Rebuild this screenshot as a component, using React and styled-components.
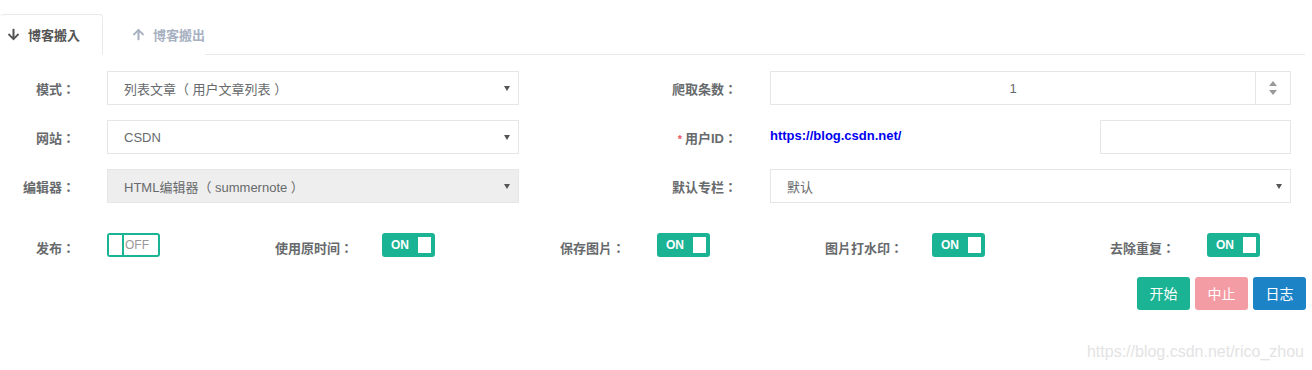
import React from 'react';
import styled, { createGlobalStyle } from 'styled-components';
import { FaArrowDown, FaArrowUp } from 'react-icons/fa';

const GlobalStyle = createGlobalStyle`
  body {
    margin: 0;
    background: #fff;
    font-family: "Liberation Sans", "Noto Sans CJK TC", sans-serif;
    font-size: 13px;
    color: #676a6c;
  }
`;

const Page = styled.div`
  position: relative;
  width: 1312px;
  height: 370px;
  overflow: hidden;
`;

const TabBar = styled.div`
  display: flex;
  margin-top: 14px;
  height: 41px;
  width: 1305px;
  border-bottom: 1px solid #e7eaec;
  box-sizing: border-box;
`;

const Tab = styled.div`
  display: flex;
  align-items: center;
  gap: 8px;
  box-sizing: border-box;
  height: 41px;
  font-weight: 700;
  font-size: 13px;
  padding: ${(p) => (p.$active ? '0 0 0 7px' : '0 0 0 29px')};
  width: ${(p) => (p.$active ? '103px' : 'auto')};
  color: ${(p) => (p.$active ? '#555' : '#a7b1c2')};
  background: #fff;
  border: ${(p) => (p.$active ? '1px solid #e7eaec' : 'none')};
  border-left: none;
  border-bottom: ${(p) => (p.$active ? '1px solid #fff' : 'none')};
  border-radius: 4px 4px 0 0;
  margin-bottom: -1px;
  svg {
    font-size: 13px;
  }
`;

const Form = styled.div`
  padding-top: 16px;
`;

const Row = styled.div`
  display: flex;
  height: 34px;
  margin-bottom: 15px;
`;

const Half = styled.div`
  display: flex;
  align-items: center;
  flex-shrink: 0;
  width: ${(p) => p.$width}px;
`;

const Label = styled.div`
  width: ${(p) => p.$width || 75}px;
  margin-right: ${(p) => p.$gap || 32}px;
  flex-shrink: 0;
  text-align: right;
  font-weight: 700;
  color: #676a6c;
  font-size: 13px;
  white-space: nowrap;
`;

const Required = styled.span`
  color: #ed5565;
  font-size: 11px;
  margin-right: 3px;
`;

const Control = styled.div`
  position: relative;
  display: flex;
  align-items: center;
  flex-shrink: 0;
  box-sizing: border-box;
  height: 34px;
  width: ${(p) => p.$width}px;
  padding-left: 16px;
  border: 1px solid #e5e6e7;
  background: ${(p) => (p.$disabled ? '#eeeeee' : '#fff')};
  color: #676a6c;
  font-size: 13px;
`;

const SelectText = styled.span`
  flex: 1;
  white-space: pre;
`;

const Caret = styled.span`
  width: 0;
  height: 0;
  margin-right: 8px;
  border-left: 3px solid transparent;
  border-right: 3px solid transparent;
  border-top: 5px solid #555;
`;

const NumberBox = styled(Control)`
  padding-left: 0;
`;

const NumberValue = styled.span`
  flex: 1;
  text-align: center;
`;

const Spinner = styled.div`
  display: flex;
  flex-direction: column;
  align-items: center;
  justify-content: center;
  gap: 4px;
  width: 34px;
  height: 100%;
  border-left: 1px solid #e5e6e7;
`;

const Tri = styled.span`
  width: 0;
  height: 0;
  border-left: 4px solid transparent;
  border-right: 4px solid transparent;
  ${(p) => (p.$up ? 'border-bottom: 5px solid #999;' : 'border-top: 5px solid #999;')}
`;

const Link = styled.span`
  color: #0000ee;
  font-weight: 700;
  font-size: 13px;
  width: 330px;
  flex-shrink: 0;
  margin-top: -3px;
`;

const SwitchRow = styled.div`
  display: flex;
  padding-top: 15px;
`;

const SwitchGroup = styled.div`
  display: flex;
  align-items: flex-start;
  flex-shrink: 0;
  width: 275px;
  ${Label} {
    padding-top: 5px;
    line-height: 22px;
  }
`;

const Switch = styled.div`
  display: flex;
  align-items: center;
  box-sizing: border-box;
  width: 53px;
  height: 24px;
  padding: 2px;
  border: 2px solid #1ab394;
  border-radius: 3px;
  background: ${(p) => (p.$on ? '#1ab394' : '#fff')};
  flex-direction: ${(p) => (p.$on ? 'row' : 'row-reverse')};
  justify-content: space-between;
`;

const SwitchText = styled.span`
  font-size: 12px;
  line-height: 16px;
  font-weight: ${(p) => (p.$on ? 700 : 400)};
  color: ${(p) => (p.$on ? '#fff' : '#999')};
  padding-left: ${(p) => (p.$on ? '5px' : '0')};
  padding-right: ${(p) => (p.$on ? '0' : '7px')};
`;

const Knob = styled.span`
  width: 13px;
  height: 16px;
  background: #fff;
  ${(p) => (p.$on ? '' : 'margin: -2px 0 -2px -2px; height: 20px; border-right: 2px solid #1ab394;')}
`;

const Actions = styled.div`
  display: flex;
  justify-content: flex-end;
  gap: 5px;
  padding: 17px 6px 0 0;
`;

const Button = styled.button`
  width: 53px;
  height: 33px;
  border: none;
  border-radius: 3px;
  color: #fff;
  font-size: 14px;
  font-family: "Noto Sans CJK SC", sans-serif;
  background: ${(p) => p.$bg};
  padding: 0 0 2px;
`;

const Watermark = styled.div`
  position: absolute;
  right: 8px;
  bottom: 9px;
  font-family: "Liberation Sans", sans-serif;
  font-size: 16px;
  color: #e3e3e3;
`;

const selectField = (text, width, disabled) => (
  <Control $width={width} $disabled={disabled}>
    <SelectText>{text}</SelectText>
    <Caret />
  </Control>
);

const toggles = [
  ['发布：', false],
  ['使用原时间：', true],
  ['保存图片：', true],
  ['图片打水印：', true],
  ['去除重复：', true],
];

export default function App() {
  return (
    <Page>
      <GlobalStyle />
      <TabBar>
        <Tab $active>
          <FaArrowDown />
          博客搬入
        </Tab>
        <Tab>
          <FaArrowUp />
          博客搬出
        </Tab>
      </TabBar>
      <Form>
        <Row>
          <Half $width={656}>
            <Label>模式：</Label>
            {selectField('列表文章（ 用户文章列表 ）', 412)}
          </Half>
          <Half $width={656}>
            <Label $width={81} $gap={33}>爬取条数：</Label>
            <NumberBox $width={521}>
              <NumberValue>1</NumberValue>
              <Spinner>
                <Tri $up />
                <Tri />
              </Spinner>
            </NumberBox>
          </Half>
        </Row>
        <Row>
          <Half $width={656}>
            <Label>网站：</Label>
            {selectField('CSDN', 412)}
          </Half>
          <Half $width={656}>
            <Label $width={81} $gap={33}>
              <Required>*</Required>用户ID：
            </Label>
            <Link>https://blog.csdn.net/</Link>
            <Control $width={191} />
          </Half>
        </Row>
        <Row>
          <Half $width={656}>
            <Label>编辑器：</Label>
            {selectField('HTML编辑器（ summernote ）', 412, true)}
          </Half>
          <Half $width={656}>
            <Label $width={81} $gap={33}>默认专栏：</Label>
            {selectField('默认', 521)}
          </Half>
        </Row>
        <SwitchRow>
          {toggles.map(([label, on]) => (
            <SwitchGroup key={label}>
              <Label>{label}</Label>
              <Switch $on={on}>
                <SwitchText $on={on}>{on ? 'ON' : 'OFF'}</SwitchText>
                <Knob $on={on} />
              </Switch>
            </SwitchGroup>
          ))}
        </SwitchRow>
        <Actions>
          <Button $bg="#1ab394">开始</Button>
          <Button $bg="#f49ca4">中止</Button>
          <Button $bg="#1c84c6">日志</Button>
        </Actions>
      </Form>
      <Watermark>https://blog.csdn.net/rico_zhou</Watermark>
    </Page>
  );
}
